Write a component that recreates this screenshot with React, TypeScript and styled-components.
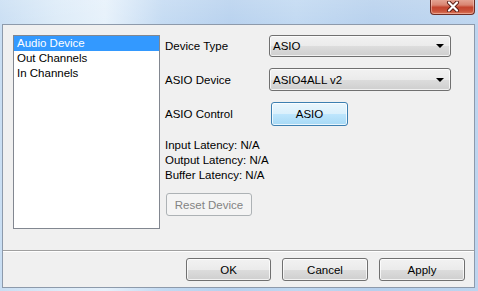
import React from "react";
import styled, { createGlobalStyle, css } from "styled-components";

const Global = createGlobalStyle`
  html, body { margin: 0; padding: 0; }
  body { width: 478px; height: 291px; overflow: hidden; font-family: "Liberation Sans", Arial, sans-serif; }
`;

const Window = styled.div`
  position: relative;
  width: 478px;
  height: 291px;
  box-sizing: border-box;
  display: flex;
  flex-direction: column;
  background:
    linear-gradient(180deg, rgba(255,255,255,0.15), rgba(255,255,255,0) 30px),
    linear-gradient(90deg, #c9def3 0%, #dcebf8 12%, #e6f1fb 22%, #c3daf2 34%, #b7d1ee 48%, #c0d8f1 62%, #b6d0ed 78%, #bdd5ef 100%);
`;

const TitleBar = styled.div`
  height: 24px;
  flex: none;
`;

const CloseButton = styled.div`
  position: absolute;
  top: -1px;
  left: 430px;
  width: 45px;
  height: 16px;
  box-sizing: border-box;
  border: 1px solid #6e2d25;
  border-top: none;
  border-radius: 0 0 4px 4px;
  background: linear-gradient(180deg, #e6a898 0%, #d98572 40%, #c4452f 55%, #c9533b 80%, #dc7a5c 100%);
  box-shadow: inset 0 0 0 1px rgba(255, 220, 210, 0.45);
  display: flex;
  align-items: center;
  justify-content: center;
`;

const Client = styled.div`
  flex: 1;
  margin: 0 3px 3px 2px;
  border: 1px solid #8d9aab;
  background: #f0f0f0;
  display: flex;
  flex-direction: column;
  font-size: 11.5px;
  color: #000;
`;

const Content = styled.div`
  display: flex;
  padding: 10px 0 0 10px;
  height: 214px;
  box-sizing: border-box;
`;

const ListBox = styled.div`
  width: 147px;
  height: 194px;
  box-sizing: border-box;
  border: 1px solid #828790;
  background: #fff;
  display: flex;
  flex-direction: column;
`;

const ListItem = styled.div<{ $selected?: boolean }>`
  height: 15px;
  line-height: 15px;
  padding-left: 3px;
  white-space: nowrap;
  ${(p) =>
    p.$selected &&
    css`
      background: #3399ff;
      color: #fff;
    `}
`;

const Pane = styled.div`
  display: flex;
  flex-direction: column;
  padding-left: 5px;
`;

const Row = styled.div<{ $h: number; $mt?: number }>`
  display: flex;
  align-items: center;
  height: ${(p) => p.$h}px;
  margin-top: ${(p) => p.$mt ?? 0}px;
`;

const Label = styled.div`
  width: 104px;
  flex: none;
`;

const Combo = styled.div`
  width: 182px;
  height: 100%;
  box-sizing: border-box;
  border: 1px solid #707070;
  border-radius: 3px;
  background: linear-gradient(180deg, #f2f2f2 0%, #ebebeb 50%, #dddddd 50%, #cfcfcf 100%);
  box-shadow: inset 0 0 0 1px rgba(255,255,255,0.7);
  display: flex;
  align-items: center;
  justify-content: space-between;
  padding: 0 6px 0 3px;
`;

const Arrow = styled.div`
  width: 0;
  height: 0;
  border-left: 4px solid transparent;
  border-right: 4px solid transparent;
  border-top: 4px solid #000;
`;

const buttonBase = css`
  box-sizing: border-box;
  border-radius: 3px;
  display: flex;
  align-items: center;
  justify-content: center;
  font-family: inherit;
  font-size: 11.5px;
  padding: 0;
`;

const Button = styled.button<{ $w: number; $h: number; $variant?: "hot" | "disabled" }>`
  ${buttonBase};
  width: ${(p) => p.$w}px;
  height: ${(p) => p.$h}px;
  color: #000;
  border: 1px solid #707070;
  background: linear-gradient(180deg, #f2f2f2 0%, #ebebeb 50%, #dddddd 50%, #cfcfcf 100%);
  box-shadow: inset 0 0 0 1px rgba(255,255,255,0.75);
  ${(p) =>
    p.$variant === "hot" &&
    css`
      border-color: #3c7fb1;
      background: linear-gradient(180deg, #eaf6fd 0%, #d9f0fc 50%, #bee6fd 50%, #a7d9f5 100%);
    `}
  ${(p) =>
    p.$variant === "disabled" &&
    css`
      border-color: #adb2b5;
      background: #f4f4f4;
      color: #838383;
      box-shadow: none;
    `}
`;

const Info = styled.div`
  margin-top: 12px;
  display: flex;
  flex-direction: column;
`;

const InfoLine = styled.div`
  height: 15px;
  line-height: 15px;
  white-space: nowrap;
`;

const ResetWrap = styled.div`
  margin-top: 10px;
  padding-left: 1px;
`;

const Separator = styled.div`
  margin-top: 11px;
  height: 1px;
  background: #a0a0a0;
  border-bottom: 1px solid #ffffff;
`;

const Footer = styled.div`
  display: flex;
  justify-content: flex-end;
  gap: 11px;
  padding: 6px 9px 0 0;
`;

export default function App() {
  return (
    <>
      <Global />
      <Window>
        <TitleBar />
        <CloseButton>
          <svg width="14" height="11" viewBox="0 0 14 11">
            <path d="M3 1.5 L11 9.5 M11 1.5 L3 9.5" stroke="#5a1d15" strokeWidth="4" strokeLinecap="round" />
            <path d="M3 1.5 L11 9.5 M11 1.5 L3 9.5" stroke="#ffffff" strokeWidth="2.2" strokeLinecap="round" />
          </svg>
        </CloseButton>
        <Client>
          <Content>
            <ListBox>
              <ListItem $selected>Audio Device</ListItem>
              <ListItem>Out Channels</ListItem>
              <ListItem>In Channels</ListItem>
            </ListBox>
            <Pane>
              <Row $h={22}>
                <Label>Device Type</Label>
                <Combo>
                  <span>ASIO</span>
                  <Arrow />
                </Combo>
              </Row>
              <Row $h={23} $mt={11}>
                <Label>ASIO Device</Label>
                <Combo>
                  <span>ASIO4ALL v2</span>
                  <Arrow />
                </Combo>
              </Row>
              <Row $h={24} $mt={11}>
                <Label>ASIO Control</Label>
                <Button $w={77} $h={24} $variant="hot" style={{ marginLeft: 2 }}>
                  ASIO
                </Button>
              </Row>
              <Info>
                <InfoLine>Input Latency: N/A</InfoLine>
                <InfoLine>Output Latency: N/A</InfoLine>
                <InfoLine>Buffer Latency: N/A</InfoLine>
              </Info>
              <ResetWrap>
                <Button $w={86} $h={23} $variant="disabled" disabled>
                  Reset Device
                </Button>
              </ResetWrap>
            </Pane>
          </Content>
          <Separator />
          <Footer>
            <Button $w={85} $h={23}>OK</Button>
            <Button $w={86} $h={23}>Cancel</Button>
            <Button $w={86} $h={23}>Apply</Button>
          </Footer>
        </Client>
      </Window>
    </>
  );
}
